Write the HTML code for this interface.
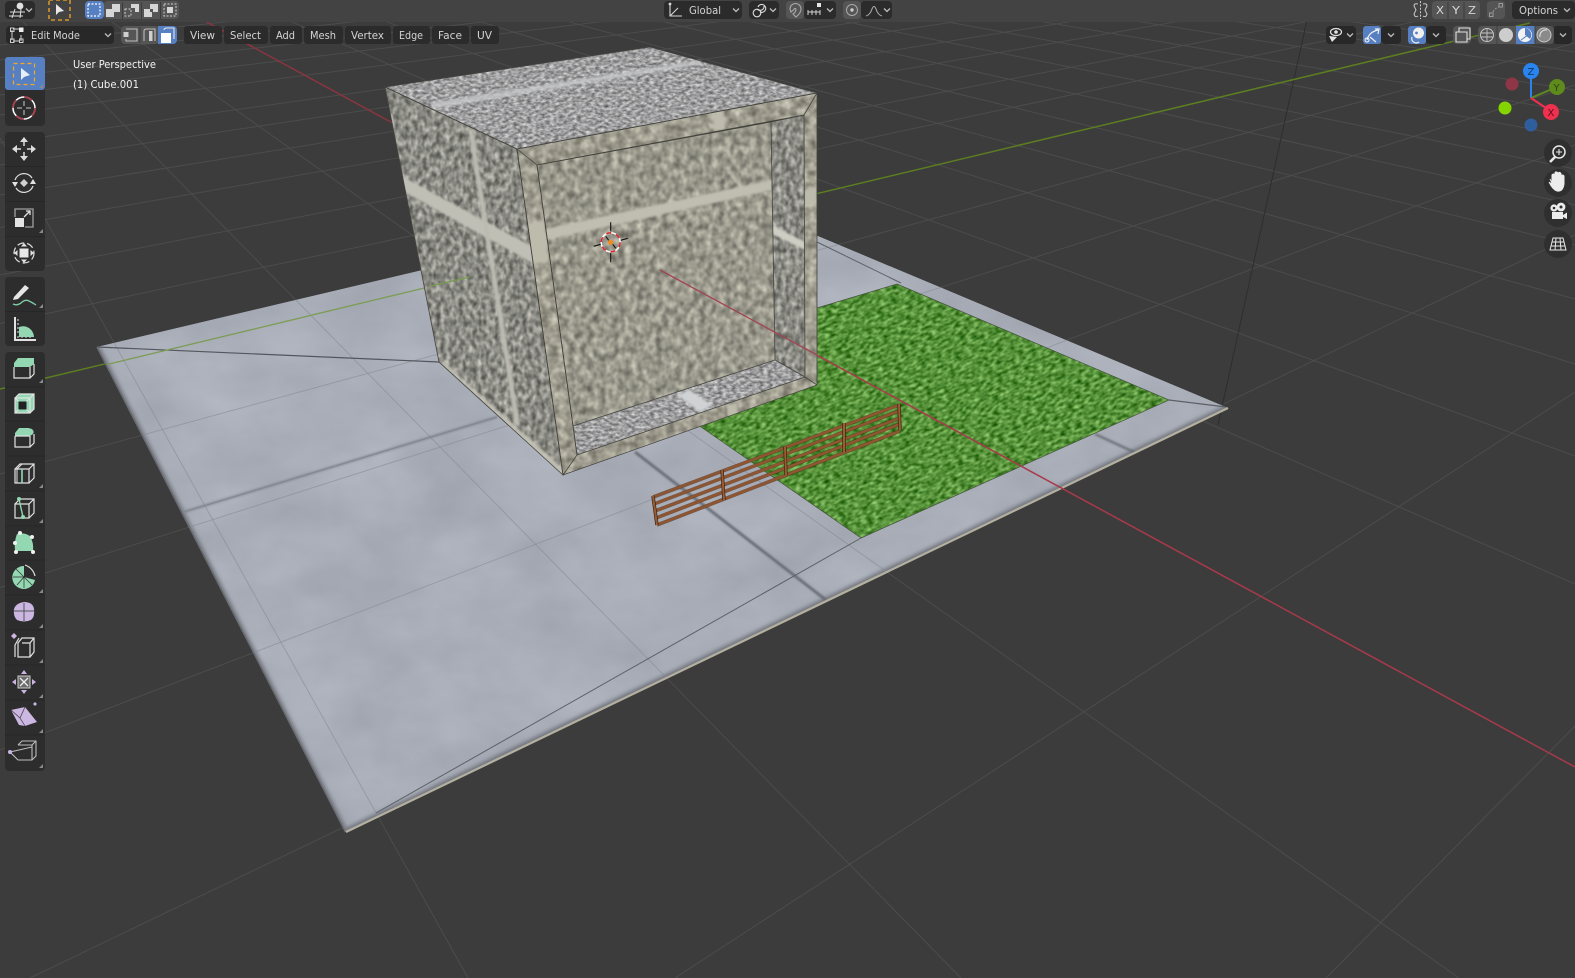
<!DOCTYPE html>
<html><head><meta charset="utf-8"><title>Blender</title>
<style>
html,body{margin:0;padding:0;background:#3c3c3c;width:1575px;height:978px;overflow:hidden}
svg{display:block;position:absolute;left:0;top:0}
text{font-family:"DejaVu Sans","Liberation Sans",sans-serif;font-size:11px;fill:#d4d4d4}
.g line{stroke:#4c4c4c;stroke-width:1}
.fg line{stroke:#878b94;stroke-width:1;opacity:.6}
.ic{fill:none;stroke:#e2e2e2;stroke-width:1.2}
.gr{fill:#93d8b2}
.pu{fill:#ccb6e2}
.ch{fill:none;stroke:#bdbdbd;stroke-width:1.3}
</style></head><body>
<svg width="1575" height="978" viewBox="0 0 1575 978" xmlns="http://www.w3.org/2000/svg">
<defs>
<filter id="fFront" x="0" y="0" width="1" height="1" color-interpolation-filters="sRGB"><feTurbulence type="fractalNoise" baseFrequency=".16 .13" numOctaves="2" seed="4"/><feColorMatrix values="0 0 0 .6 .3  0 0 0 .6 .295  0 0 0 .55 .27  0 0 0 0 1"/><feGaussianBlur stdDeviation=".7"/></filter>
<filter id="fLeft" x="0" y="0" width="1" height="1" color-interpolation-filters="sRGB"><feTurbulence type="fractalNoise" baseFrequency=".22 .15" numOctaves="2" seed="9"/><feColorMatrix values="0 0 0 .75 .17  0 0 0 .75 .17  0 0 0 .72 .16  0 0 0 0 1"/><feGaussianBlur stdDeviation=".5"/></filter>
<filter id="fTop" x="0" y="0" width="1" height="1" color-interpolation-filters="sRGB"><feTurbulence type="fractalNoise" baseFrequency=".22 .38" numOctaves="2" seed="14"/><feColorMatrix values="0 0 0 .7 .27  0 0 0 .7 .27  0 0 0 .7 .275  0 0 0 0 1"/></filter>
<filter id="fRing" x="0" y="0" width="1" height="1" color-interpolation-filters="sRGB"><feTurbulence type="fractalNoise" baseFrequency=".12" numOctaves="2" seed="21"/><feColorMatrix values="0 0 0 .5 .37  0 0 0 .5 .36  0 0 0 .47 .32  0 0 0 0 1"/></filter>
<filter id="fGrass" x="0" y="0" width="1" height="1" color-interpolation-filters="sRGB"><feTurbulence type="fractalNoise" baseFrequency=".17 .36" numOctaves="2" seed="6"/><feColorMatrix values="0 0 0 .85 -.09  0 0 0 .8 .17  0 0 0 .75 -.15  0 0 0 0 1"/><feGaussianBlur stdDeviation=".4"/></filter>
<filter id="fFloor" x="0" y="0" width="1" height="1" color-interpolation-filters="sRGB"><feTurbulence type="fractalNoise" baseFrequency=".012 .018" numOctaves="4" seed="11"/><feColorMatrix values="0 0 0 .1 .61  0 0 0 .1 .63  0 0 0 .1 .67  0 0 0 0 1"/></filter>
<filter id="b1"><feGaussianBlur stdDeviation="1"/></filter>
<filter id="b2"><feGaussianBlur stdDeviation="2"/></filter>
<clipPath id="cFloor"><polygon points="97,347 727,198 1228,408 345.5,832"/></clipPath>
<clipPath id="cGrass"><polygon points="861,538 1169,400 897,284 616,368"/></clipPath>
<clipPath id="cLeft"><polygon points="385,87 517,149 563,475 439,362"/></clipPath>
<clipPath id="cTop"><polygon points="385,87 650,47 817,93 517,149"/></clipPath>
<clipPath id="cRing"><path d="M517,149 L817,93 L817,385 L563,475Z M537,165 L577,455 L805,377 L804,115Z" clip-rule="evenodd"/></clipPath>
<clipPath id="cBack"><polygon points="537,165 771,122 775,360 573,426"/></clipPath>
<clipPath id="cWallR"><polygon points="771,122 804,115 805,377 775,360"/></clipPath>
<clipPath id="cWallB"><polygon points="573,426 775,360 805,377 577,455"/></clipPath>
<path id="chev" class="ch" d="M-3,-1.5 L0,1.5 L3,-1.5"/>
<polygon id="tri" points="4,0 4,4 0,4" fill="#8a8a8a"/>
<g id="box"><path class="ic" d="M-9,-4 H5 V10 H-9Z M-9,-4 L-4,-9 H10 V5 L5,10 M5,-4 L10,-9"/></g>
</defs>

<rect width="1575" height="978" fill="#3c3c3c"/>

<!-- grid -->
<g class="g">
<line x1="0" y1="138" x2="468" y2="978"/><line x1="1.5" y1="0" x2="961" y2="978"/><line x1="81" y1="0" x2="1459" y2="978"/>
<line x1="242" y1="0" x2="1575" y2="584"/><line x1="327" y1="0" x2="1575" y2="456"/><line x1="411" y1="0" x2="1575" y2="364"/><line x1="490" y1="0" x2="1575" y2="299"/><line x1="575" y1="0" x2="1575" y2="245"/><line x1="653" y1="0" x2="1575" y2="205"/><line x1="738" y1="0" x2="1575" y2="169"/><line x1="828" y1="0" x2="1575" y2="137"/><line x1="915" y1="0" x2="1575" y2="112"/><line x1="1001" y1="0" x2="1575" y2="90"/><line x1="1087" y1="0" x2="1575" y2="71"/><line x1="1190" y1="0" x2="1575" y2="52"/>
<line x1="0" y1="45" x2="441" y2="0"/><line x1="0" y1="60" x2="556" y2="0"/><line x1="0" y1="77.5" x2="674" y2="0"/><line x1="0" y1="95" x2="779" y2="0"/><line x1="0" y1="115" x2="885" y2="0"/><line x1="0" y1="143" x2="1014" y2="0"/><line x1="0" y1="165" x2="1100" y2="0"/><line x1="0" y1="195" x2="1204" y2="0"/><line x1="0" y1="227.5" x2="1300" y2="0"/><line x1="0" y1="275" x2="1418" y2="0"/><line x1="0" y1="323.5" x2="1516" y2="0"/><line x1="0" y1="474" x2="1575" y2="43"/><line x1="0" y1="587.5" x2="1575" y2="85"/><line x1="0" y1="750" x2="1575" y2="145"/><line x1="30" y1="978" x2="1575" y2="235"/><line x1="675" y1="978" x2="1575" y2="392"/><line x1="1326" y1="978" x2="1575" y2="726"/>
</g>
<!-- z axis -->
<line x1="1307" y1="20" x2="1218" y2="425" stroke="#2e2e2e" stroke-width="1"/>
<!-- axes on background -->
<line x1="0" y1="389" x2="1530" y2="23" stroke="#5c7d20" stroke-width="1.5"/>
<line x1="203" y1="20" x2="400" y2="127" stroke="#8a3540" stroke-width="1.5"/>

<!-- floor -->
<polygon points="97,347 727,198 1228,408 345.5,832" fill="#a8adb8"/>
<g clip-path="url(#cFloor)">
<rect x="90" y="190" width="1145" height="650" filter="url(#fFloor)"/>
<line x1="97" y1="347" x2="345.5" y2="832" stroke="#6d7077" stroke-width="5" filter="url(#b2)"/>
<line x1="345.5" y1="832" x2="1228" y2="408" stroke="#6f727a" stroke-width="7" filter="url(#b2)"/>
<g class="fg">
<line x1="0" y1="138" x2="468" y2="978"/><line x1="1.5" y1="0" x2="961" y2="978"/><line x1="81" y1="0" x2="1459" y2="978"/>
<line x1="0" y1="474" x2="1575" y2="43"/><line x1="0" y1="587.5" x2="1575" y2="85"/><line x1="0" y1="750" x2="1575" y2="145"/>
</g>
<line x1="184.5" y1="511.7" x2="497" y2="417" stroke="#7b7f88" stroke-width="2" filter="url(#b1)" opacity=".9"/>
<line x1="184.5" y1="511.7" x2="497" y2="417" stroke="#83868f" stroke-width="1"/>
<line x1="635" y1="452" x2="826" y2="600" stroke="#5f6269" stroke-width="2.5" filter="url(#b1)"/>
<line x1="1095" y1="434" x2="1136" y2="453" stroke="#5f6269" stroke-width="2" filter="url(#b1)"/>
<line x1="817" y1="242" x2="901" y2="283" stroke="#5d6066" stroke-width="1"/>
<line x1="97" y1="347" x2="439" y2="362" stroke="#53565d" stroke-width="1.2"/>
<line x1="376" y1="813" x2="861" y2="538" stroke="#5d6067" stroke-width="1"/>
<line x1="1169" y1="400" x2="1226" y2="407" stroke="#5d6067" stroke-width="1.2"/>
<line x1="105" y1="365" x2="470" y2="277" stroke="#7d9c56" stroke-width="1.3"/>
</g>
<line x1="97" y1="347" x2="345.5" y2="832" stroke="#6a6d72" stroke-width="1.5"/>
<line x1="346" y1="832" x2="1228" y2="408" stroke="#b4b0a0" stroke-width="2.2"/>

<!-- grass -->
<g clip-path="url(#cGrass)">
<rect x="560" y="180" width="680" height="460" transform="rotate(-24 880 410)" filter="url(#fGrass)"/>
</g>
<polygon points="861,538 1169,400 897,284 616,368" fill="none" stroke="#46523c" stroke-width=".7"/>

<!-- red axis over floor -->
<line x1="660" y1="270" x2="1575" y2="767" stroke="#a83a4a" stroke-width="1.5"/>

<!-- cube top -->
<g clip-path="url(#cTop)"><rect x="380" y="44" width="440" height="108" filter="url(#fTop)"/></g>
<polygon points="430,103 700,60 702,64 435,108" fill="#c9cacb" opacity=".8" filter="url(#b1)"/>
<!-- left face -->
<g clip-path="url(#cLeft)"><rect x="380" y="85" width="190" height="395" filter="url(#fLeft)"/>
<polygon points="400,175 533,247 534,264 401,190" fill="#c0bfb5" filter="url(#b1)"/>
<polygon points="468,128 473,130 520,425 515,425" fill="#bcbbb2" filter="url(#b1)"/>
<polygon points="439,362 447,365 565,470 563,477" fill="#c5c4b8" opacity=".9" filter="url(#b1)"/>
</g>
<!-- ring -->
<g clip-path="url(#cRing)"><rect x="510" y="90" width="310" height="390" filter="url(#fRing)"/>
<rect x="713" y="108" width="11" height="22" fill="#bebcad" transform="rotate(-6 718 118)" filter="url(#b1)"/>
<polygon points="527,223 545,221 548,262 532,264" fill="#bdbbac" filter="url(#b1)"/>
<polygon points="804,190 817,187 817,203 804,206" fill="#bdbbac" filter="url(#b1)"/>
<polygon points="727,405 737,403 738,418 728,421" fill="#bdbbac" filter="url(#b1)"/>
</g>
<!-- recess back -->
<g clip-path="url(#cBack)"><rect x="530" y="118" width="250" height="312" filter="url(#fFront)"/>
<polygon points="545,229 772,180 772,190 547,240" fill="#c0beb0" filter="url(#b1)"/>
</g>
<!-- right wall -->
<g clip-path="url(#cWallR)"><rect x="768" y="112" width="40" height="268" filter="url(#fLeft)"/>
<polygon points="772,225 805,242 805,250 772,234" fill="#cfcec4" filter="url(#b1)"/></g>
<!-- bottom wall -->
<g clip-path="url(#cWallB)"><rect x="570" y="358" width="240" height="100" filter="url(#fTop)"/>
<polygon points="677,395 690,390 712,405 700,412" fill="#d0d2d4" filter="url(#b1)"/></g>
<!-- cube edges -->
<g fill="none" stroke="#44443f" stroke-width=".8">
<polygon points="385,87 650,47 817,93 517,149"/>
<polygon points="517,149 817,93 817,385 563,475"/>
<polygon points="385,87 517,149 563,475 439,362"/>
<polygon points="537,165 804,115 805,377 577,455"/>
<polygon points="537,165 771,122 775,360 573,426"/>
<path d="M771,122 L804,115 M775,360 L805,377 M573,426 L577,455 M517,149 L537,165 M817,93 L804,115 M817,385 L805,377 M563,475 L577,455"/>
</g>
<!-- axis on cube -->
<line x1="430" y1="286" x2="470" y2="277" stroke="#789c4c" stroke-width="1.2"/>
<line x1="660" y1="270" x2="830" y2="362" stroke="#a04652" stroke-width="1.3"/>

<!-- 3d cursor -->
<g transform="translate(610.7,242.3)">
<circle r="9.5" fill="none" stroke="#fff" stroke-width="1.5"/>
<circle r="9.5" fill="none" stroke="#e0222b" stroke-width="1.5" stroke-dasharray="5 5"/>
<path d="M0,-20 V-11 M0,11 V20 M-17,4 L-10,2 M10,-2 L17,-4 M-5,-6 L-2,-2 M5,6 L2,2" stroke="#111" stroke-width="1.1" fill="none"/>
<circle r="2.6" fill="#f28b1c"/>
</g>

<!-- fence -->
<g fill="none">
<g stroke="#2e1c10" stroke-width="3.6" opacity=".6"><path d="M653,497 L899,405 M654,504 L899,411 M655,511 L900,418 M656,518 L900,424 M657,525 L900,431"/></g>
<g stroke="#8f5530" stroke-width="2.8"><path d="M653,497 L899,405 M654,504 L899,411 M655,511 L900,418 M656,518 L900,424 M657,525 L900,431"/></g>
<g stroke="#3a2414" stroke-width="3.4"><path d="M653,496 L657,525 M722,470 L724,500 M785,447 L786,475 M844,423 L844,452 M899,404 L900,430"/></g>
<g stroke="#9a5c33" stroke-width="2"><path d="M653,496 L657,525 M722,470 L724,500 M785,447 L786,475 M844,423 L844,452 M899,404 L900,430"/></g>
</g>

<!-- top header -->
<rect x="0" y="0" width="1575" height="22" fill="#434343"/>
<g fill="#2b2b2b">
<rect x="5" y="1" width="30" height="18" rx="4"/>
<rect x="664" y="1" width="78" height="18" rx="4"/>
<rect x="749" y="1" width="30" height="18" rx="4"/>
<rect x="804" y="1" width="32" height="18" rx="4"/>
<rect x="861" y="1" width="31" height="18" rx="4"/>
<rect x="1512" y="1" width="63" height="18" rx="4"/>
</g>
<g fill="#555">
<rect x="104" y="1" width="75" height="18" rx="4"/>
<rect x="786" y="1" width="18" height="18" rx="4"/>
<rect x="843" y="1" width="18" height="18" rx="4"/>
<rect x="1432" y="1" width="48" height="18" rx="4"/>
<rect x="1487" y="1" width="18" height="18" rx="4"/>
</g>
<rect x="85" y="1" width="19" height="18" rx="4" fill="#5680c2"/>
<path d="M122.5,2V19M141.5,2V19M160.5,2V19M1448,2V19M1464,2V19" stroke="#3c3c3c" stroke-width="1"/>
<!-- editor icon -->
<g fill="none" stroke="#dcdcdc" stroke-width="1"><path d="M10,12H25M9,16H23M15,9L12,18M21,9L20,18"/></g><circle cx="20" cy="6" r="3.4" fill="#e0e0e0"/>
<use href="#chev" x="29" y="10"/>
<!-- tool icon -->
<rect x="49" y="0" width="21" height="20" fill="none" stroke="#f5a623" stroke-width="1.3" stroke-dasharray="4 3"/>
<polygon points="56,4 56,15 59,12 64,11" fill="#e8e8e8"/>
<!-- select mode icons -->
<rect x="88" y="4" width="12" height="12" fill="none" stroke="#fff" stroke-width="1.2" stroke-dasharray="2 1.5"/>
<path d="M106,9H112V4H120V12H114V17H106Z" fill="#d6d6d6"/>
<path d="M125,9H131V16H125Z" fill="none" stroke="#cfcfcf" stroke-dasharray="2 1.5"/><path d="M131,4H139V12H135V8H131Z" fill="#d6d6d6"/>
<path d="M144,9H150V4H158V12H152V17H144Z" fill="#d6d6d6"/><rect x="150" y="9" width="3" height="3" fill="#555"/>
<rect x="164" y="4" width="12" height="12" fill="none" stroke="#cfcfcf" stroke-dasharray="2 1.5"/><rect x="167" y="7" width="6" height="6" fill="#d6d6d6"/>
<!-- orientation -->
<g fill="none" stroke="#d6d6d6" stroke-width="1.1"><path d="M670,4V16H682M670,16L678,8"/></g><circle cx="670" cy="4" r="1.4" fill="#d6d6d6"/>
<text x="689" y="14" textLength="32" lengthAdjust="spacingAndGlyphs">Global</text>
<use href="#chev" x="736" y="10"/>
<circle cx="757" cy="13" r="3.8" fill="none" stroke="#ddd" stroke-width="1.1"/><path d="M760,12 A4,4 0 1 0 758,7 M757,9 A4,4 0 0 0 764,6" fill="none" stroke="#ddd" stroke-width="1.1"/>
<use href="#chev" x="773" y="10"/>
<path d="M790,9 A5.5,5.5 0 0 1 801,9 Q801,13 796,17 L793,14 Q796,12 796,9.5 A1,1 0 0 0 794,9.5 L791,12Z" fill="none" stroke="#aaa" stroke-width="1.1"/>
<path d="M808,12H820M808,10V15M812,10V15M816,10V15M820,10V15" stroke="#d0d0d0" fill="none" stroke-width="1"/><rect x="817" y="3" width="4" height="4" fill="#e6e6e6"/>
<use href="#chev" x="830" y="10"/>
<circle cx="852" cy="10" r="5.5" fill="none" stroke="#aaa" stroke-width="1"/><circle cx="852" cy="10" r="1.7" fill="#ccc"/>
<path d="M866,16 Q870,15 872,9 Q874,4 876,9 Q878,15 882,16" fill="none" stroke="#aaa" stroke-width="1.1"/>
<use href="#chev" x="887" y="10"/>
<!-- right header -->
<path d="M1420.5,1V19" stroke="#ccc" stroke-dasharray="2 1.4" fill="none"/>
<path d="M1418,4 Q1414,3 1414,6 L1416,10 L1414,14 Q1415,18 1418,16 M1423,4 Q1427,3 1427,6 L1425,10 L1427,14 Q1426,18 1423,16" fill="none" stroke="#c8c8c8" stroke-width="1"/>
<text x="1436" y="14" textLength="8" lengthAdjust="spacingAndGlyphs">X</text><text x="1452" y="14" textLength="8" lengthAdjust="spacingAndGlyphs">Y</text><text x="1468" y="14" textLength="8" lengthAdjust="spacingAndGlyphs">Z</text>
<g fill="none" stroke="#9a9a9a" stroke-width="1"><rect x="1489.5" y="13" width="3.5" height="3.5"/><rect x="1499" y="3.5" width="3.5" height="3.5"/><path d="M1493,12 Q1495,8 1499,7" stroke-dasharray="2 1.5"/></g>
<text x="1519" y="14" textLength="39" lengthAdjust="spacingAndGlyphs">Options</text>
<use href="#chev" x="1567" y="10"/>

<!-- second row left -->
<rect x="6" y="26" width="108" height="18" rx="4" fill="#282828"/>
<g fill="none" stroke="#cfcfcf" stroke-width="1"><path d="M12,30V40M13,29H20M21,35V41M13,41H20"/><rect x="10.5" y="39" width="3.5" height="3.5"/><rect x="10.5" y="28" width="3.5" height="3.5"/><rect x="19.5" y="39" width="3.5" height="3.5"/></g><rect x="19" y="27.5" width="4.5" height="4.5" fill="#eee"/>
<text x="31" y="39" textLength="49" lengthAdjust="spacingAndGlyphs">Edit Mode</text>
<use href="#chev" x="108" y="35"/>
<rect x="121" y="26" width="38" height="18" rx="4" fill="#555"/>
<rect x="159" y="26" width="18" height="18" rx="4" fill="#5680c2"/><rect x="158" y="26" width="8" height="18" fill="#5680c2"/>
<path d="M140,27V43" stroke="#3c3c3c"/>
<path d="M126,29H137V41H126V39" fill="none" stroke="#bdbdbd" stroke-width="1.1"/><rect x="123.5" y="32" width="5" height="5" fill="#cfcfcf"/>
<path d="M144,41V31 Q144,29 147,29H155V41" fill="none" stroke="#bdbdbd" stroke-width="1.1"/><rect x="149" y="31" width="3.5" height="10" fill="#cfcfcf"/>
<rect x="161" y="33" width="10" height="10" fill="#fff"/><path d="M164,30 Q164,28 167,28H174V39" fill="none" stroke="#e4e4e4" stroke-width="1.1"/>
<g fill="#2a2a2a" opacity=".92">
<rect x="184" y="26" width="38" height="18" rx="3"/><rect x="224" y="26" width="44" height="18" rx="3"/><rect x="270" y="26" width="32" height="18" rx="3"/><rect x="304" y="26" width="39" height="18" rx="3"/><rect x="345" y="26" width="46" height="18" rx="3"/><rect x="393" y="26" width="37" height="18" rx="3"/><rect x="432" y="26" width="37" height="18" rx="3"/><rect x="471" y="26" width="28" height="18" rx="3"/>
</g>
<text x="190" y="39" textLength="25" lengthAdjust="spacingAndGlyphs">View</text>
<text x="230" y="39" textLength="31" lengthAdjust="spacingAndGlyphs">Select</text>
<text x="276" y="39" textLength="19" lengthAdjust="spacingAndGlyphs">Add</text>
<text x="310" y="39" textLength="26" lengthAdjust="spacingAndGlyphs">Mesh</text>
<text x="351" y="39" textLength="33" lengthAdjust="spacingAndGlyphs">Vertex</text>
<text x="399" y="39" textLength="24" lengthAdjust="spacingAndGlyphs">Edge</text>
<text x="438" y="39" textLength="24" lengthAdjust="spacingAndGlyphs">Face</text>
<text x="477" y="39" textLength="15" lengthAdjust="spacingAndGlyphs">UV</text>

<!-- second row right -->
<g fill="#282828">
<rect x="1326" y="26" width="30" height="18" rx="4"/><rect x="1381" y="26" width="20" height="18" rx="4"/><rect x="1426" y="26" width="20" height="18" rx="4"/><rect x="1553" y="26" width="19" height="18" rx="4"/>
</g>
<rect x="1363" y="26" width="18" height="18" rx="3" fill="#5680c2"/>
<rect x="1408" y="26" width="18" height="18" rx="3" fill="#5680c2"/>
<rect x="1453" y="26" width="18" height="18" rx="4" fill="#555"/>
<rect x="1478" y="26" width="76" height="18" rx="4" fill="#555"/>
<rect x="1516" y="26" width="19" height="18" fill="#5680c2"/>
<path d="M1497,26V44M1535,26V44" stroke="#3f3f3f"/>
<ellipse cx="1336" cy="32" rx="5.5" ry="3.5" fill="none" stroke="#e4e4e4" stroke-width="1.2"/><circle cx="1336" cy="32" r="1.8" fill="#e4e4e4"/><polygon points="1329,36 1337,37 1332,42" fill="#e4e4e4"/>
<use href="#chev" x="1350" y="35"/>
<path d="M1367,40 Q1369,32 1378,30 M1375,29 L1379,29 L1378,34 M1370,37 L1376,42" fill="none" stroke="#f0f0f0" stroke-width="1.2"/><circle cx="1367" cy="40" r="2" fill="none" stroke="#fff"/>
<use href="#chev" x="1391" y="35"/>
<circle cx="1418.5" cy="33" r="5.5" fill="#f0f0f0"/><path d="M1412,37 A4.5,4.5 0 0 0 1419,42" fill="none" stroke="#eee" stroke-width="1.2"/><circle cx="1416.5" cy="33" r="1.4" fill="#5680c2"/>
<use href="#chev" x="1436" y="35"/>
<path d="M1459,32H1467V42H1456V32H1459ZM1459,32V28H1470V39H1467" fill="none" stroke="#e0e0e0" stroke-width="1.1"/>
<circle cx="1487" cy="35" r="6.5" fill="none" stroke="#c4c4c4"/><path d="M1481,33H1493M1481,37H1493M1487,28.5V41.5" stroke="#c4c4c4" fill="none" stroke-width=".9"/>
<circle cx="1506" cy="35" r="7" fill="#cdcdcd"/>
<circle cx="1525" cy="35" r="7" fill="#f2f2f2"/><path d="M1525,28 V35 L1530,39 A7,7 0 0 0 1525,28Z" fill="#5680c2"/><path d="M1521,40 L1528,35" stroke="#5680c2"/>
<circle cx="1544" cy="35" r="7" fill="#8a8a8a" stroke="#c8c8c8"/><path d="M1540,37 A6,6 0 0 1 1547,30" fill="none" stroke="#e8e8e8"/>
<use href="#chev" x="1563" y="35"/>

<!-- overlay text -->
<g fill="#fff"><text x="73" y="68" textLength="83" lengthAdjust="spacingAndGlyphs" style="fill:#f4f4f4">User Perspective</text>
<text x="73" y="88" textLength="66" lengthAdjust="spacingAndGlyphs" style="fill:#f4f4f4">(1) Cube.001</text></g>

<!-- toolbar -->
<g fill="#2d2d2d">
<rect x="5" y="57" width="40" height="69" rx="4"/>
<rect x="5" y="132" width="40" height="139" rx="4"/>
<rect x="5" y="277" width="40" height="69" rx="4"/>
<rect x="5" y="352" width="40" height="419" rx="4"/>
</g>
<rect x="5" y="57" width="40" height="33" rx="3" fill="#5680c2"/>
<path d="M5,166.5H45M5,201.5H45M5,236.5H45M5,311.5H45M5,387H45M5,421H45M5,456H45M5,491H45M5,526H45M5,560H45M5,595H45M5,630H45M5,665H45M5,700H45M5,735H45" stroke="#262626"/>
<!-- corner triangles -->
<use href="#tri" x="39" y="84"/><use href="#tri" x="39" y="229"/><use href="#tri" x="39" y="304"/><use href="#tri" x="39" y="379"/><use href="#tri" x="39" y="484"/><use href="#tri" x="39" y="519"/><use href="#tri" x="39" y="589"/><use href="#tri" x="39" y="624"/><use href="#tri" x="39" y="659"/><use href="#tri" x="39" y="694"/><use href="#tri" x="39" y="729"/><use href="#tri" x="39" y="764"/>

<g transform="translate(24,74)"><rect x="-10.5" y="-10.5" width="21" height="21" fill="none" stroke="#f5a623" stroke-width="1.2" stroke-dasharray="4 3"/><polygon points="-3,-6 -3,6 0,3 6,1" fill="#e8eef8"/></g>
<g transform="translate(24,108)"><circle r="11" fill="none" stroke="#fff" stroke-width="1.5"/><circle r="11" fill="none" stroke="#b03a48" stroke-width="1.5" stroke-dasharray="8.6 8.6"/><path d="M-7,0H-2M2,0H7M0,-7V-2M0,2V7" stroke="#a8a8a8" stroke-width="1.3"/></g>
<g transform="translate(24,149)" fill="#dcdcdc"><polygon points="0,-12 -4,-7 4,-7"/><polygon points="0,12 -4,7 4,7"/><polygon points="-12,0 -7,-4 -7,4"/><polygon points="12,0 7,-4 7,4"/><path d="M0,-7V-3M0,3V7M-7,0H-3M3,0H7" stroke="#dcdcdc" stroke-width="1.5"/></g>
<g transform="translate(24,183)"><path d="M-9,-3 A9.5,9.5 0 0 1 8,-5 M9,3 A9.5,9.5 0 0 1 -8,5" fill="none" stroke="#dcdcdc" stroke-width="1.3"/><polygon points="0,-4 4,0 0,4 -4,0" fill="#cfcfcf"/><polygon points="-12,-1 -6,-1 -9,4" fill="#e2e2e2"/><polygon points="12,1 6,1 9,-4" fill="#e2e2e2"/></g>
<g transform="translate(24,218)"><path d="M-9,-1V-9H9V9H1" fill="none" stroke="#a0a0a0" stroke-width="1.3"/><rect x="-9" y="0" width="9" height="9" fill="#e4e4e4"/><path d="M0,-1 L6,-7 M2,-7H6V-3" fill="none" stroke="#e4e4e4" stroke-width="1.3"/></g>
<g transform="translate(24,253)"><circle r="10" fill="none" stroke="#dcdcdc" stroke-width="1.2" stroke-dasharray="7 3"/><rect x="-4.5" y="-4.5" width="9" height="9" fill="#e8e8e8"/><g fill="#e2e2e2"><polygon points="0,-10 -3,-6.5 3,-6.5"/><polygon points="0,10 -3,6.5 3,6.5"/><polygon points="-10,0 -6.5,-3 -6.5,3"/><polygon points="10,0 6.5,-3 6.5,3"/></g></g>
<g transform="translate(24,294)"><path d="M-10,3 L1,-9 L5,-6 L-6,5 L-11,6Z" fill="#e6e6e6"/><path d="M-11,10 Q-7,12 -3,9 Q1,5 5,7 Q9,9 12,11" fill="none" stroke="#7fcfa4" stroke-width="1.3"/></g>
<g transform="translate(24,329)"><path d="M-9,-12V11H12" fill="none" stroke="#e2e2e2" stroke-width="2"/><path d="M-7,-9H-5M-7,-5H-5M-7,-1H-5M-7,3H-5M-6,9V7M-2,9V7M2,9V7M6,9V7" stroke="#e2e2e2"/><path d="M-5,-2 A11,11 0 0 1 10,8 H-5Z" class="gr"/></g>
<g transform="translate(24,368)"><path class="gr" d="M-10,-5 L-6,-10 H10 V-4 L6,-1 H-10Z"/><path class="ic" d="M-10,-1V10H6V-1 M6,10 L10,6 V-4"/></g>
<g transform="translate(24,403)"><path class="gr" d="M-9,-5 H6 V10 H-9Z M-9,-5 L-5,-9 H10 L6,-5Z M6,-5 L10,-9 V6 L6,10Z"/><rect x="-5.5" y="-1.5" width="8" height="8" fill="#222"/><path class="ic" d="M-9,-5H6V10H-9Z M-9,-5 L-5,-9 H10 V6 L6,10 M6,-5 L10,-9 M-9,-5 L-5.5,-1.5 M6,-5 L2.5,-1.5 M-9,10 L-5.5,6.5 M6,10 L2.5,6.5" stroke-width=".9"/></g>
<g transform="translate(24,438)"><path class="gr" d="M-9,-2 V-5 L-5,-10 H5 L10,-6 L6,-2Z"/><circle cx="6" cy="-6" r="3.5" fill="#93d8b2"/><path class="ic" d="M-9,-2V9H6V-2 M6,9 L10,5 V-4 M-9,-2 H6"/></g>
<g transform="translate(24,473)"><use href="#box"/><path d="M-2,-9 L-7,-4 V10" fill="none" stroke="#e2e2e2"/><path d="M-2,-4 V10" stroke="#93d8b2" stroke-width="1.6"/></g>
<g transform="translate(24,508)"><use href="#box"/><path d="M-5,-9 L-1,9" stroke="#93d8b2" stroke-width="1.4"/><circle cx="-5" cy="-9" r="2" fill="#93d8b2"/><circle cx="-1" cy="9" r="2" fill="#93d8b2"/></g>
<g transform="translate(24,543)"><path class="gr" d="M-7,-9 Q0,-11 6,-7 Q10,0 9,8 H-9 Q-10,-2 -7,-9Z"/><g fill="#f0f0f0"><circle cx="-4" cy="-10" r="2"/><circle cx="8" cy="-6" r="2"/><circle cx="-9" cy="0" r="2"/><circle cx="-8" cy="9" r="2"/><circle cx="9" cy="9" r="2"/></g></g>
<g transform="translate(24,577)"><path class="gr" d="M0,0 L0,-11 A11.5,11.5 0 1 0 11,3 Z"/><path d="M0,0 L-11,0 M0,0 L-7,8 M0,0 L0,11 M0,0 L8,8 M0,0 L-8,-8" stroke="#2d2d2d" stroke-width=".7"/><path d="M1,-12 Q9,-9 11,-1" class="ic"/></g>
<g transform="translate(24,612)"><path class="pu" d="M-10,-3 Q-8,-9 0,-10 Q9,-10 10,-3 Q11,5 7,8 Q0,11 -7,8 Q-11,4 -10,-3Z"/><path d="M-10,-1H10M0,-9V9" stroke="#555" stroke-width="1"/></g>
<g transform="translate(24,647)"><path class="ic" d="M-6,-4 L-2,-9 H10 V5 L6,10 H-6Z M-2,-4H6V10 M6,-4L10,-9 M-9,10V-2 L-5,-9"/><polygon class="pu" points="-10,-14 -7,-11 -10,-8 -13,-11"/></g>
<g transform="translate(24,682)"><rect x="-6" y="-6" width="12" height="12" fill="#6a6a6a" stroke="#ccc"/><path d="M-4,-4L4,4M4,-4L-4,4" stroke="#eee" stroke-width="1.3"/><g class="pu"><polygon points="0,-12 -3,-8 3,-8"/><polygon points="0,12 -3,8 3,8"/><polygon points="-12,0 -8,-3 -8,3"/><polygon points="12,0 8,-3 8,3"/></g></g>
<g transform="translate(24,716)"><polygon class="pu" points="-13,-6 1,-9 13,6 1,10 -5,9"/><path d="M1,-9 L-4,2 L1,10 M-13,-6 L-4,2" stroke="#3a3a3a" stroke-width=".7" fill="none"/><polygon class="pu" points="11,-14 13,-12 11,-10 9,-12"/></g>
<g transform="translate(24,751)"><path d="M-6,-6 L-2,-10 H12 V5 L8,9 H-6 M8,9 V-6 H-6 M8,-6 L12,-10" fill="none" stroke="#bdbdbd" stroke-width="1.1"/><path d="M-14,1 L8,-4 M-14,1 L-6,9" stroke="#bdbdbd" stroke-width="1.1"/><circle cx="-14" cy="1" r="2" class="pu"/></g>

<!-- gizmo -->
<circle cx="1512" cy="84" r="6.5" fill="#8e3546"/>
<circle cx="1531" cy="125" r="6.5" fill="#2f5e9c"/>
<circle cx="1505" cy="108" r="6.5" fill="#84d400"/>
<path d="M1531,98V75" stroke="#2a84f0" stroke-width="2"/>
<path d="M1531,98L1552,89" stroke="#5f8a1c" stroke-width="2"/>
<path d="M1531,98L1546,108" stroke="#f0304f" stroke-width="2"/>
<circle cx="1531" cy="71" r="8" fill="#2a84f0"/>
<circle cx="1557" cy="87" r="8" fill="#5f8a1c"/>
<circle cx="1551" cy="112" r="8" fill="#f0304f"/>
<text x="1527.5" y="75" style="fill:#14365f;font-size:10px">Z</text>
<text x="1553.5" y="91" style="fill:#2d4210;font-size:10px">Y</text>
<text x="1547.5" y="116" style="fill:#5c0f1d;font-size:10px">X</text>

<!-- nav buttons -->
<circle cx="1558" cy="153" r="14" fill="#2f2f2f"/><circle cx="1558" cy="183" r="14" fill="#2f2f2f"/><circle cx="1558" cy="213" r="14" fill="#2f2f2f"/><circle cx="1558" cy="244" r="14" fill="#2f2f2f"/>
<circle cx="1559" cy="152" r="6" fill="none" stroke="#e8e8e8" stroke-width="1.5"/><path d="M1556,152H1562M1559,149V155" stroke="#e8e8e8" stroke-width="1.1"/><path d="M1555,157L1550,162" stroke="#e8e8e8" stroke-width="2.6"/>
<path d="M1552,183 L1550,179 M1552,183V175 Q1553,173 1555,175 V180 V172.5 Q1556,171 1558,173 V180 V173 Q1559.5,171.5 1561,173.5 V181 V176 Q1563,174 1564,176 V184 Q1563,192 1557,191 Q1553,190 1549,182" fill="#ececec" stroke="#ececec" stroke-width="1"/>
<circle cx="1554" cy="208" r="3.6" fill="#ececec"/><circle cx="1561" cy="207" r="4.4" fill="#ececec"/><circle cx="1554" cy="208" r="1.3" fill="#2f2f2f"/><circle cx="1561" cy="207" r="1.5" fill="#2f2f2f"/><rect x="1552" y="212" width="11" height="7" fill="#ececec"/><polygon points="1563,215 1567,212.5 1567,219 1563,217" fill="#ececec"/>
<path d="M1553,238H1563L1566,250H1550Z M1552,242H1564M1551,246H1565M1556,238L1555,250M1560,238L1561,250" fill="none" stroke="#e8e8e8" stroke-width="1"/>
</svg>
</body></html>
